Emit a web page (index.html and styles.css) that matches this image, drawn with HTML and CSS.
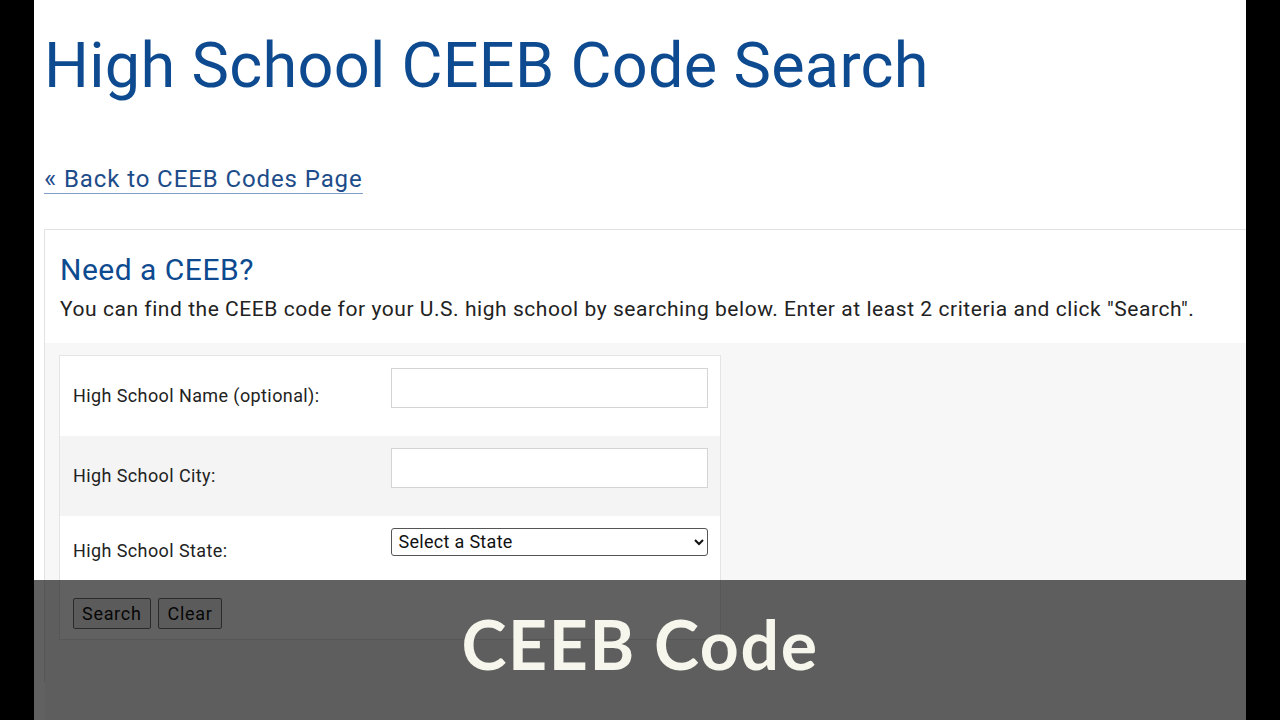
FILE: index.html
```html
<!DOCTYPE html>
<html>
	<head>
		<meta charset="utf-8">
		<title>High School CEEB Code Search</title>
		<link rel="stylesheet" href="styles.css">
	</head>
	<body>
		<div class="frame">
			<h1 class="title">High School CEEB Code Search</h1>

			<a class="back" href="#"><span class="chev">&laquo;</span> Back to CEEB Codes Page</a>

			<!-- search card -->
			<div class="card">
				<div class="intro">
					<h2>Need a CEEB?</h2>
					<p>You can find the CEEB code for your U.S. high school by searching below. Enter at least 2 criteria and click "Search".</p>
				</div>

				<div class="search-area">
					<table class="search-form">
						<tr>
							<td class="label">High School Name (optional):</td>
							<td class="field"><input type="text"></td>
						</tr>
						<tr class="alt">
							<td class="label">High School City:</td>
							<td class="field"><input type="text"></td>
						</tr>
						<tr>
							<td class="label">High School State:</td>
							<td class="field">
								<select>
									<option>Select a State</option>
								</select>
							</td>
						</tr>
						<tr>
							<td class="buttons" colspan="2">
								<button type="button">Search</button>
								<button type="button">Clear</button>
							</td>
						</tr>
					</table>
				</div>
			</div>

			<!-- caption bar over the video -->
			<div class="caption">CEEB Code</div>
		</div>
	</body>
</html>
```

FILE: styles.css
```css
* {
    margin: 0;
    padding: 0;
    box-sizing: border-box;
}

body {
    background: #000;
    font-family: Roboto, "Liberation Sans", sans-serif;
}

.frame {
    position: relative;
    width: 1212px;
    height: 720px;
    margin: 0 auto;
    padding: 28px 0 0 10px;
    background: #fff;
    overflow: hidden;
}

.title {
    font-size: 63px;
    font-weight: 400;
    line-height: 76px;
    color: #0d4a8f;
    letter-spacing: 0.3px;
}

.back {
    display: inline-block;
    margin-top: 60px;
    font-size: 24px;
    line-height: 28px;
    letter-spacing: 0.9px;
    color: #1d4c8a;
    text-decoration: none;
    border-bottom: 1px solid #7f9ec8;
}

.back .chev {
    font-size: 26px;
}

.card {
    width: 1240px;
    margin-top: 35px;
    border: 1px solid #e2e2e2;
    height: 453px;
}

.intro {
    padding: 22px 15px 21px;
}

.intro h2 {
    font-size: 30px;
    font-weight: 400;
    line-height: 36px;
    letter-spacing: 0.5px;
    color: #0d4a8f;
}

.intro p {
    margin-top: 8px;
    font-size: 21px;
    line-height: 26px;
    letter-spacing: 0.55px;
    color: #222;
}

.search-area {
    height: 100%;
    padding: 12px 14px;
    background: #f7f7f7;
}

.search-form {
    width: 662px;
    border: 1px solid #e4e4e4;
    border-collapse: collapse;
    background: #fff;
}

.search-form tr {
    height: 80px;
}

.search-form tr:nth-child(3) {
    height: 70px;
}

.search-form tr:nth-child(4) {
    height: 54px;
}

.search-form .alt {
    background: #f4f4f4;
}

.search-form .label {
    padding-left: 13px;
    font-size: 18px;
    letter-spacing: 0.4px;
    color: #222;
    vertical-align: middle;
}

.search-form .field {
    width: 330px;
    padding: 12px 12px 0 0;
    vertical-align: top;
}

.search-form input {
    display: block;
    width: 317px;
    height: 40px;
    border: 1px solid #d4d4d4;
    background: #fff;
}

.search-form select {
    display: block;
    width: 317px;
    height: 28px;
    padding-left: 3px;
    font-family: Roboto, "Liberation Sans", sans-serif;
    font-size: 18px;
    letter-spacing: 0.3px;
    color: #111;
    border: 1px solid #555;
    border-radius: 3px;
    background: #fff;
}

.buttons {
    padding: 0 0 0 13px;
    vertical-align: top;
    padding-top: 12px;
}

.buttons button {
    height: 31px;
    padding: 0 8px;
    margin-right: 4px;
    font-family: Roboto, "Liberation Sans", sans-serif;
    font-size: 18px;
    letter-spacing: 0.7px;
    color: #111;
    background: #efefef;
    border: 1px solid #6f6f6f;
    border-radius: 2px;
}

.caption {
    position: absolute;
    left: 0;
    right: 0;
    bottom: 0;
    height: 140px;
    padding-top: 24px;
    background: rgba(0, 0, 0, 0.62);
    color: #f6f6ec;
    font-family: Lato, "DejaVu Sans", sans-serif;
    font-weight: 700;
    font-size: 68px;
    line-height: 80px;
    letter-spacing: 1.6px;
    text-align: center;
}
```
